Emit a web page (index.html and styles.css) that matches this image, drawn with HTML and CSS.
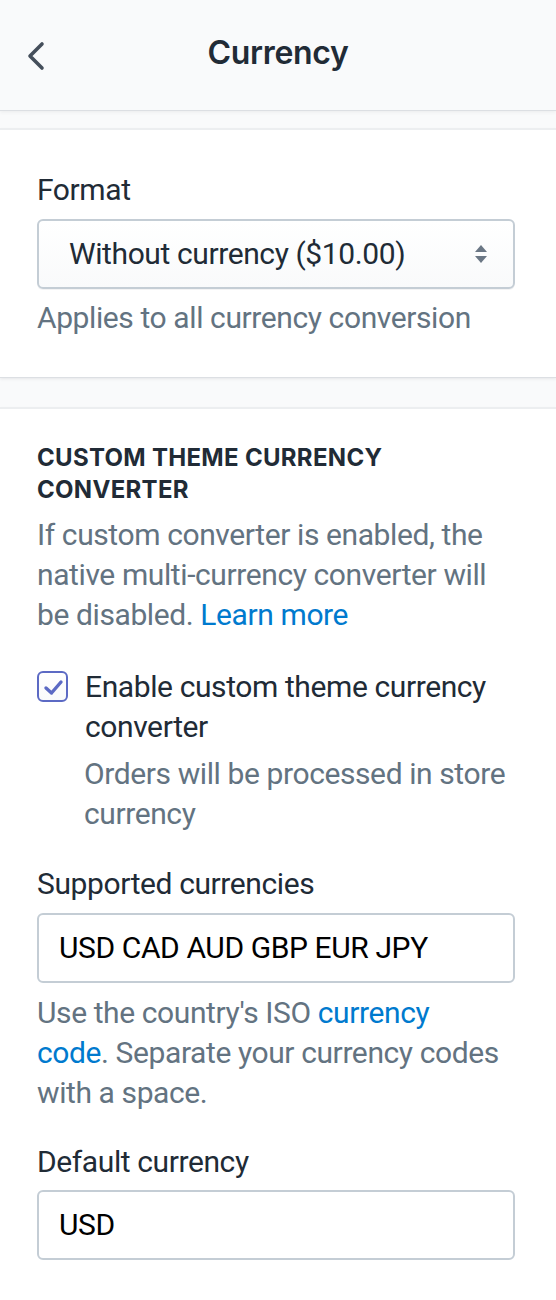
FILE: index.html
```html
<!DOCTYPE html>
<html lang="en">
<head>
<meta charset="utf-8">
<title>Currency</title>
<link rel="stylesheet" href="styles.css">
</head>
<body>
<div class="page">
  <header class="topbar">
    <button class="back" aria-label="Back">
      <svg width="20" height="30" viewBox="0 0 20 30"><polyline points="16,3 4,15 16,27" fill="none" stroke="#454f5b" stroke-width="3.6" stroke-linecap="round" stroke-linejoin="round"/></svg>
    </button>
    <h1 class="title">Currency</h1>
  </header>

  <section class="card">
    <label class="label">Format</label>
    <div class="select">
      <span class="select-value">Without currency ($10.00)</span>
      <svg class="select-arrows" width="14" height="22" viewBox="0 0 14 22"><polygon points="7,2 13,9 1,9" fill="#6b7785"/><polygon points="1,13 13,13 7,20" fill="#6b7785"/></svg>
    </div>
    <p class="help">Applies to all currency conversion</p>
  </section>

  <section class="card card-last">
    <h2 class="subheading">Custom theme currency converter</h2>
    <p class="help desc">If custom converter is enabled, the native multi-currency converter will be disabled. <a href="#" class="link">Learn more</a></p>

    <div class="checkrow">
      <span class="checkbox">
        <svg width="26" height="26" viewBox="0 0 26 26"><polyline points="6,14 11.5,19 21,8" fill="none" stroke="#5c6ac4" stroke-width="3.4" stroke-linecap="round" stroke-linejoin="round"/></svg>
      </span>
      <span class="check-label">Enable custom theme currency converter</span>
    </div>
    <p class="help check-help">Orders will be processed in store currency</p>

    <label class="label label-gap">Supported currencies</label>
    <div class="input">USD CAD AUD GBP EUR JPY</div>
    <p class="help help-input">Use the country's ISO <a href="#" class="link">currency code</a>. Separate your currency codes with a space.</p>

    <label class="label label-gap label-last">Default currency</label>
    <div class="input input-last">USD</div>
  </section>
</div>
</body>
</html>
```

FILE: styles.css
```css
* { box-sizing: border-box; }

html, body {
  margin: 0;
  padding: 0;
  background: #f9fafb;
}

body {
  font-family: Roboto, "Noto Sans", "Liberation Sans", sans-serif;
  font-size: 30px;
  line-height: 40px;
  letter-spacing: -0.4px;
  color: #212b36;
}

.page {
  width: 556px;
  min-height: 1300px;
  display: flex;
  flex-direction: column;
}

.topbar {
  height: 110px;
  background: #f9fafb;
  display: flex;
  align-items: center;
  justify-content: center;
  position: relative;
  box-shadow: 0 1px 0 #dcdfe3, 0 2px 4px rgba(63, 63, 68, 0.08);
  z-index: 2;
}

.back {
  position: absolute;
  left: 24px;
  top: 41px;
  width: 24px;
  height: 30px;
  padding: 0 0 0 2px;
  border: 0;
  background: none;
  display: flex;
}

.title {
  margin: 0;
  font-family: Inter, Roboto, sans-serif;
  font-size: 32px;
  line-height: 40px;
  font-weight: 600;
  color: #212b36;
  letter-spacing: -0.3px;
  padding-bottom: 4px;
}

.card {
  background: #fff;
  margin-top: 18px;
  border-top: 2px solid #eceef0;
  box-shadow: 0 1px 0 #dcdfe3, 0 2px 3px rgba(63, 63, 68, 0.1);
  padding: 40px 41px 39px 37px;
  display: flex;
  flex-direction: column;
}

.card-last {
  margin-top: 30px;
  padding-top: 33px;
  flex: 1;
}

.label {
  display: block;
  color: #212b36;
}

.label-gap {
  margin-top: 30px;
}

.label-last {
  margin-top: 29px;
}

.select {
  margin-top: 9px;
  height: 70px;
  border: 2px solid #c4cdd5;
  border-radius: 6px;
  background: linear-gradient(#ffffff, #f9fafb);
  box-shadow: 0 1px 0 rgba(22, 29, 37, 0.05);
  display: flex;
  align-items: center;
  justify-content: space-between;
  padding: 0 25px 0 30px;
  color: #212b36;
}

.select-arrows {
  display: block;
}

.help {
  margin: 9px 0 0 0;
  color: #637381;
}

.subheading {
  margin: 0;
  font-family: Inter, Roboto, sans-serif;
  font-size: 24px;
  line-height: 32px;
  font-weight: 700;
  text-transform: uppercase;
  letter-spacing: 0.3px;
  color: #212b36;
}

.desc {
  margin-top: 9px;
}

.link {
  color: #007ace;
  text-decoration: none;
}

.checkrow {
  margin-top: 32px;
  display: flex;
  align-items: flex-start;
  gap: 17px;
}

.checkbox {
  flex: none;
  margin-top: 4px;
  width: 31px;
  height: 31px;
  border: 2px solid #5c6ac4;
  border-radius: 6px;
  background: linear-gradient(#ffffff, #f9fafb);
  display: flex;
  align-items: center;
  justify-content: center;
}

.check-label {
  color: #212b36;
}

.check-help {
  margin-top: 7px;
  padding-left: 47px;
}

.input {
  margin-top: 9px;
  height: 70px;
  border: 2px solid #c4cdd5;
  border-radius: 6px;
  background: #fff;
  display: flex;
  align-items: center;
  padding: 0 20px;
  color: #000;
}

.input-last {
  margin-top: 8px;
}

.help-input {
  margin-top: 10px;
  padding-right: 12px;
}
```
